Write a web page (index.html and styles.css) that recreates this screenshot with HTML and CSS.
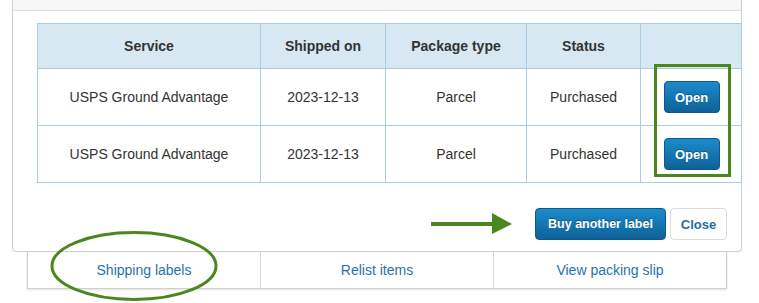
FILE: index.html
```html
<!DOCTYPE html>
<html>
<head>
<meta charset="utf-8">
<link rel="stylesheet" href="styles.css">
</head>
<body>
<div class="page">
  <div class="modal">
    <div class="modal-top"></div>
    <div class="modal-body">
      <table class="labels">
        <colgroup>
          <col class="c1"><col class="c2"><col class="c3"><col class="c4"><col class="c5">
        </colgroup>
        <thead>
          <tr><th>Service</th><th>Shipped on</th><th>Package type</th><th>Status</th><th></th></tr>
        </thead>
        <tbody>
          <tr><td>USPS Ground Advantage</td><td>2023-12-13</td><td>Parcel</td><td>Purchased</td><td><button class="btn btn-open">Open</button></td></tr>
          <tr><td>USPS Ground Advantage</td><td>2023-12-13</td><td>Parcel</td><td>Purchased</td><td><button class="btn btn-open">Open</button></td></tr>
        </tbody>
      </table>
      <div class="actions">
        <button class="btn btn-primary">Buy another label</button>
        <button class="btn btn-close">Close</button>
      </div>
    </div>
  </div>
  <div class="tabs">
    <a class="tab">Shipping labels</a>
    <a class="tab">Relist items</a>
    <a class="tab">View packing slip</a>
  </div>

  <div class="hl-rect"></div>
  <svg class="hl-arrow" width="90" height="24" viewBox="0 0 90 24">
    <rect x="0" y="9" width="64" height="4" fill="#4a871e"/>
    <polygon points="61,0 81,11 61,21" fill="#4a871e"/>
  </svg>
  <svg class="hl-ellipse" width="172" height="74" viewBox="0 0 172 74">
    <ellipse cx="86" cy="37" rx="82" ry="33.5" fill="none" stroke="#4a871e" stroke-width="3"/>
  </svg>
</div>
</body>
</html>
```

FILE: styles.css
```css
* { box-sizing: border-box; }
html, body { margin: 0; padding: 0; background: #fff; }
body { font-family: "Liberation Sans", Arial, sans-serif; font-size: 14px; color: #333; }

.page { position: relative; width: 759px; height: 303px; overflow: hidden; }

.modal {
  margin-left: 12px;
  width: 730px;
  border-left: 1px solid #cfcfcf;
  border-right: 1px solid #cfcfcf;
  border-bottom: 1px solid #cfcfcf;
  border-radius: 0 0 4px 4px;
  background: #fff;
}
.modal-top {
  height: 11px;
  background: #f7f7f7;
  border-bottom: 1px solid #dedede;
}
.modal-body {
  padding: 12px 14px 11px 24px;
}

.labels {
  border-collapse: collapse;
  table-layout: fixed;
  width: 704px;
}
.labels col.c1 { width: 223px; }
.labels col.c2 { width: 125px; }
.labels col.c3 { width: 141px; }
.labels col.c4 { width: 114px; }
.labels col.c5 { width: 101px; }
.labels th, .labels td {
  border: 1px solid #a9cde2;
  text-align: center;
  padding: 0;
}
.labels th {
  height: 45px;
  background: #d8e8f2;
  font-weight: bold;
  color: #333;
  font-size: 14px;
}
.labels td {
  height: 57px;
  color: #333;
}

.btn {
  font-family: "Liberation Sans", Arial, sans-serif;
  font-weight: bold;
  cursor: pointer;
  border-radius: 4px;
  white-space: nowrap;
  padding: 0;
}
.btn-open {
  width: 56px;
  height: 32px;
  font-size: 13px;
  color: #fff;
  border: 1px solid #0d5a88;
  background: linear-gradient(#1b8bcb, #0f6198);
  text-shadow: 0 -1px 0 rgba(0,0,0,0.3);
  margin-left: 1px;
}
.actions {
  display: flex;
  justify-content: flex-end;
  gap: 4px;
  margin-top: 25px;
}
.btn-primary {
  height: 32px;
  width: 131px;
  font-size: 12.5px;
  color: #fff;
  border: 1px solid #0d5a88;
  background: linear-gradient(#1b8bcb, #0f6198);
  text-shadow: 0 -1px 0 rgba(0,0,0,0.3);
}
.btn-close {
  height: 32px;
  width: 57px;
  font-size: 13px;
  color: #1e6ea5;
  border: 1px solid #dcdcdc;
  background: #fff;
}

.tabs {
  display: flex;
  margin-left: 27px;
  width: 700px;
  height: 37px;
  border-left: 1px solid #cfcfcf;
  border-right: 1px solid #cfcfcf;
  border-bottom: 1px solid #cfcfcf;
  box-shadow: 0 1px 2px rgba(0,0,0,0.12);
}
.tab {
  flex: 1;
  display: flex;
  align-items: center;
  justify-content: center;
  color: #1f73ad;
  font-size: 14px;
  border-left: 1px solid #d6d6d6;
}
.tab:first-child { border-left: none; }

.hl-rect {
  position: absolute;
  left: 654px;
  top: 64px;
  width: 77px;
  height: 113px;
  border: 3px solid #4a871e;
}
.hl-arrow {
  position: absolute;
  left: 431px;
  top: 213px;
}
.hl-ellipse {
  position: absolute;
  left: 48px;
  top: 229px;
}
```
